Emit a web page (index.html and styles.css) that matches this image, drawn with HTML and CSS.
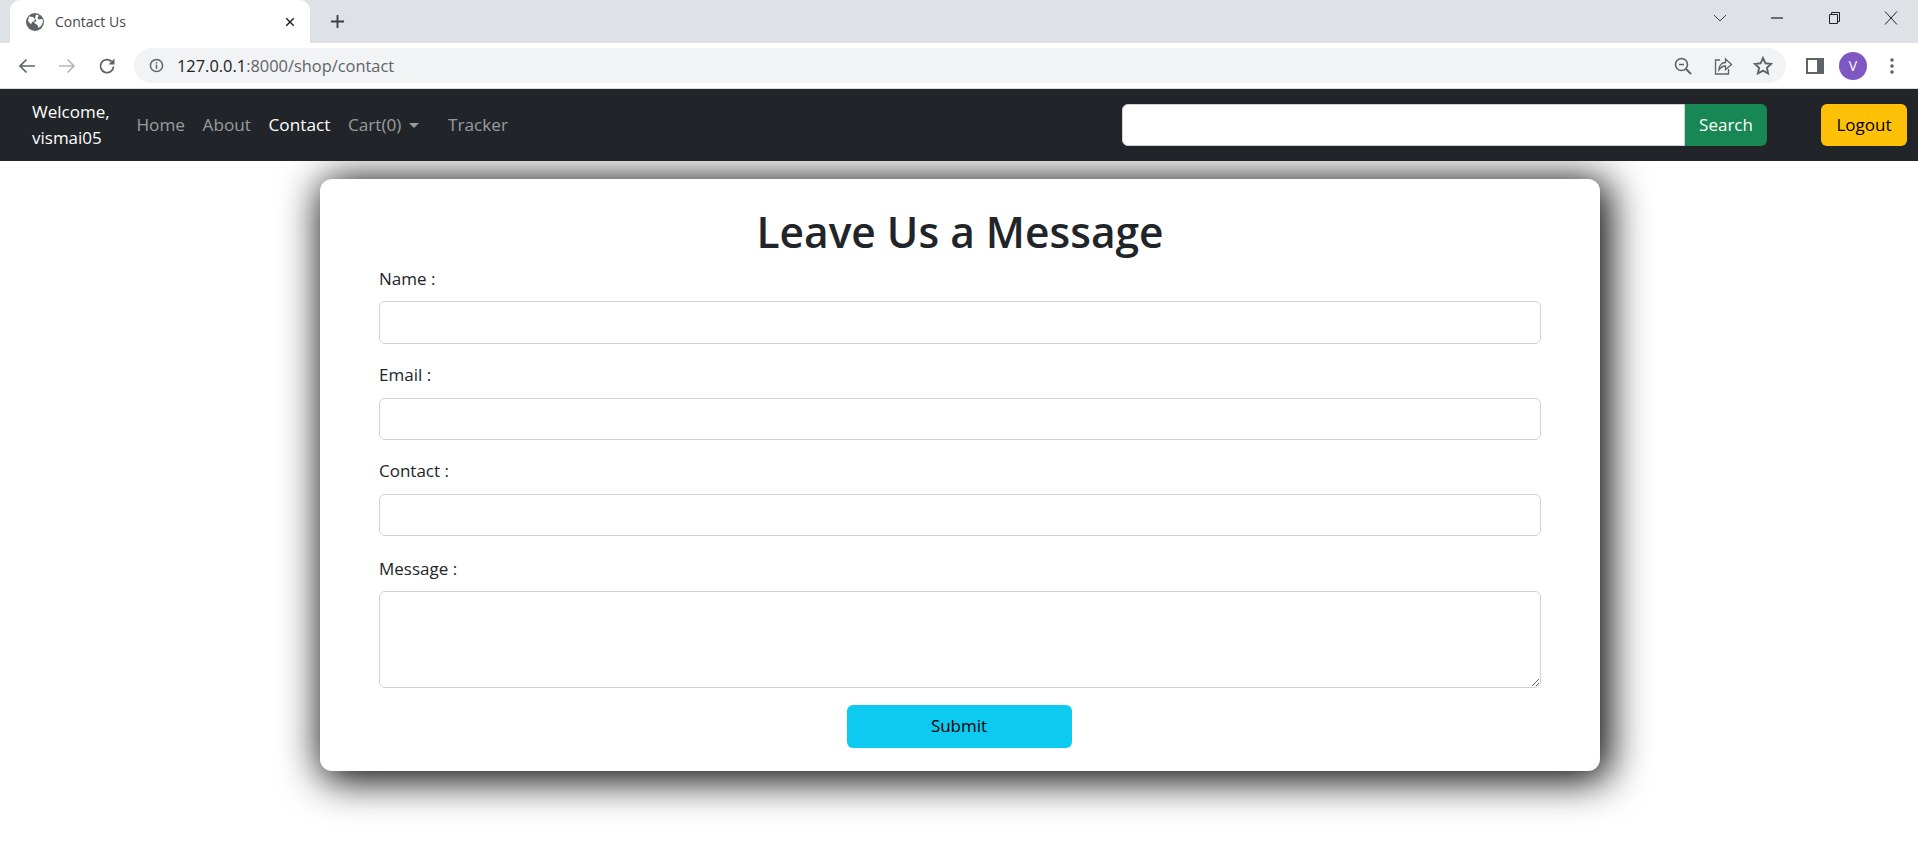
FILE: index.html
```html
<!DOCTYPE html>
<html lang="en">
<head>
    <meta charset="UTF-8">
    <title>Contact Us</title>
    <link rel="stylesheet" href="styles.css">
</head>
<body>
    <!-- Browser tab strip -->
    <div class="tabstrip">
        <div class="tab">
            <svg class="favicon" viewBox="0 0 18 18"><circle cx="9" cy="9" r="9" fill="#5f6368"/><path d="M3 3.5l4 .5 2 2-1 2.5-2 .5-1 2.5L2 8zM10 1.5l3 1-1.500 2.5 1 1.5 4-.5.5 3-2 4-2.500 2-1-3-2.500-1.500L8 9.500l2.500-1.500-1.500-2.500z" fill="#fff"/></svg>
            <span class="tab-title">Contact Us</span>
            <svg class="tab-close" viewBox="0 0 12 12"><path d="M1.500 1.500l9 9M10.500 1.500l-9 9" stroke="#202124" stroke-width="1.700"/></svg>
        </div>
        <svg class="new-tab" viewBox="0 0 16 16"><path d="M8 1v14M1 8h14" stroke="#3c4043" stroke-width="2"/></svg>
        <div class="window-btns">
            <svg viewBox="0 0 14 14"><path d="M1 4l6 6 6-6" fill="none" stroke="#3c4043"/></svg>
            <svg viewBox="0 0 14 14"><path d="M1 7h12" stroke="#202124" stroke-width="1.200"/></svg>
            <svg viewBox="0 0 14 14"><path d="M2.500 3.500h8v9h-8zM4.500 3.500v-2h8v9h-2" fill="none" stroke="#202124"/></svg>
            <svg viewBox="0 0 14 14"><path d="M1 .5l12 13M13 .5l-12 13" stroke="#202124"/></svg>
        </div>
    </div>

    <!-- Browser toolbar -->
    <div class="toolbar">
        <svg class="tool" viewBox="0 0 18 18"><path d="M17 9H2M8.500 2.500L2 9l6.500 6.500" fill="none" stroke="#5f6368" stroke-width="1.700"/></svg>
        <svg class="tool" viewBox="0 0 18 18"><path d="M1 9h15M9.500 2.500L16 9l-6.500 6.500" fill="none" stroke="#b4b6b9" stroke-width="1.700"/></svg>
        <svg class="tool" viewBox="0 0 18 18"><path d="M15.500 9.500a6.500 6.500 0 1 1-1.900-5" fill="none" stroke="#5f6368" stroke-width="1.800"/><path d="M16.500 1.500v6h-6z" fill="#5f6368"/></svg>
        <div class="address">
            <svg class="info" viewBox="0 0 16 16"><circle cx="8" cy="8" r="6.500" fill="none" stroke="#5f6368" stroke-width="1.600"/><path d="M8 7v4.500M8 4.300v1.600" stroke="#5f6368" stroke-width="1.600"/></svg>
            <span class="url"><b>127.0.0.1</b>:8000/shop/contact</span>
            <svg class="addr-icon first" viewBox="0 0 20 20"><circle cx="8.500" cy="8.500" r="6" fill="none" stroke="#5f6368" stroke-width="1.600"/><path d="M13 13l5 5" stroke="#5f6368" stroke-width="2"/><path d="M6 8.500h5" stroke="#5f6368" stroke-width="1.500"/></svg>
            <svg class="addr-icon" viewBox="0 0 20 20"><path d="M7 4H2.500v14h13v-5" fill="none" stroke="#5f6368" stroke-width="1.300"/><path d="M6 14c0-5 3-7.500 6.500-7.500V3L18.500 8.500l-6 5V10C9.500 10 7.500 11.500 6 14z" fill="none" stroke="#5f6368" stroke-width="1.300"/></svg>
            <svg class="addr-icon" viewBox="0 0 20 20"><path d="M10 2l2.400 5.300 5.800.6-4.300 3.900 1.200 5.700-5.100-2.900-5.100 2.900 1.200-5.700L1.800 7.900l5.800-.6z" fill="none" stroke="#5f6368" stroke-width="1.900"/></svg>
        </div>
        <svg class="panel" viewBox="0 0 18 18"><path d="M0 1h18v16H0z" fill="#5f6368"/><path d="M2 3h9v12H2z" fill="#fff"/></svg>
        <div class="avatar">V</div>
        <svg class="dots" viewBox="0 0 4 16"><circle cx="2" cy="2" r="1.800" fill="#5f6368"/><circle cx="2" cy="8" r="1.800" fill="#5f6368"/><circle cx="2" cy="14" r="1.800" fill="#5f6368"/></svg>
    </div>

    <!-- Navbar -->
    <nav class="navbar">
        <div class="brand">Welcome,<br>vismai05</div>
        <a class="nav-link" href="#">Home</a>
        <a class="nav-link" href="#">About</a>
        <a class="nav-link active" href="#">Contact</a>
        <a class="nav-link cart" href="#">Cart(0)<span class="caret"></span></a>
        <a class="nav-link" href="#">Tracker</a>
        <form class="search">
            <input class="search-input" type="text">
            <button class="btn btn-search" type="button">Search</button>
        </form>
        <button class="btn btn-logout" type="button">Logout</button>
    </nav>

    <!-- Contact form -->
    <main class="page">
        <div class="card">
            <h1>Leave Us a Message</h1>
            <div class="field">
                <label for="name">Name :</label>
                <input id="name" type="text">
            </div>
            <div class="field">
                <label for="email">Email :</label>
                <input id="email" type="text">
            </div>
            <div class="field">
                <label for="contact">Contact :</label>
                <input id="contact" type="text">
            </div>
            <div class="field message">
                <label for="message">Message :</label>
                <textarea id="message"></textarea>
            </div>
            <button class="btn btn-submit" type="button">Submit</button>
        </div>
    </main>
</body>
</html>
```

FILE: styles.css
```css
/* General */
body {
    margin: 0;
    height: 852px;
    overflow: hidden;
    background-color: #fff;
    color: #212529;
    font-family: "Open Sans", "Noto Sans", sans-serif;
    font-size: 17px;
}

svg {
    display: block;
    flex: none;
}

/* Tab strip */
.tabstrip {
    height: 43px;
    background-color: #dee1e6;
    display: flex;
    align-items: flex-end;
}

.tab {
    width: 300px;
    height: 43px;
    margin-left: 10px;
    background-color: #fff;
    border-radius: 10px 10px 0 0;
    display: flex;
    align-items: center;
    padding: 0 14px 0 16px;
    box-sizing: border-box;
}

.favicon {
    width: 18px;
    height: 18px;
    margin-top: 1px;
}

.tab-title {
    margin-left: 11px;
    font-size: 14px;
    color: #45494d;
    flex: 1;
}

.tab-close {
    width: 10px;
    height: 10px;
    margin-right: 1px;
    margin-top: 1px;
}

.new-tab {
    width: 15px;
    height: 15px;
    margin: 0 0 14px 20px;
}

.window-btns {
    margin-left: auto;
    align-self: flex-start;
    display: flex;
    gap: 43px;
    padding: 11px 20px 0 0;
}

.window-btns svg {
    width: 14px;
    height: 14px;
}

/* Toolbar */
.toolbar {
    height: 45px;
    border-bottom: 1px solid #dadce0;
    display: flex;
    align-items: center;
    padding-left: 18px;
}

.tool {
    width: 18px;
    height: 18px;
    margin-right: 22px;
}

.address {
    width: 1652px;
    height: 35px;
    margin-left: -4px;
    background-color: #f1f3f4;
    border-radius: 18px;
    display: flex;
    align-items: center;
    padding-left: 15px;
    box-sizing: border-box;
}

.info {
    width: 15px;
    height: 15px;
}

.url {
    margin-left: 13px;
    font-size: 16.4px;
    color: #5f6368;
}

.url b {
    font-weight: 400;
    color: #202124;
}

.addr-icon {
    width: 20px;
    height: 20px;
    margin-right: 20px;
}

.addr-icon:last-child {
    margin-right: 13px;
}

.addr-icon.first {
    margin-left: auto;
}

.panel {
    width: 18px;
    height: 18px;
    margin-left: 20px;
}

.avatar {
    width: 28px;
    height: 28px;
    margin-left: 15px;
    border-radius: 50%;
    background-color: #7e57c2;
    color: #fff;
    font-size: 14px;
    text-align: center;
    line-height: 28px;
}

.dots {
    width: 4px;
    height: 16px;
    margin-left: 23px;
}

/* Navbar */
.navbar {
    position: relative;
    z-index: 1;
    height: 72px;
    background-color: #212529;
    display: flex;
    align-items: center;
    padding-left: 32px;
}

.brand {
    color: #fff;
    line-height: 26.4px;
    margin-right: 18px;
}

.nav-link {
    color: rgba(255, 255, 255, .55);
    text-decoration: none;
    padding: 0 8.8px 2px;
    font-size: 17.2px;
}

.nav-link.active {
    color: #fff;
}

.cart {
    margin-right: 11px;
}

.caret {
    display: inline-block;
    margin-left: 8px;
    vertical-align: 3px;
    border-top: 5px solid;
    border-left: 5px solid transparent;
    border-right: 5px solid transparent;
}

.search {
    display: flex;
    margin-left: auto;
}

.search-input {
    width: 563px;
    height: 42px;
    box-sizing: border-box;
    border: 1px solid #ced4da;
    border-radius: 6px 0 0 6px;
    background-color: #fff;
}

.btn {
    height: 42px;
    border: 0;
    border-radius: 6px;
    font-family: inherit;
    font-size: inherit;
    padding: 0 0 2px;
}

.btn-search {
    width: 82px;
    background-color: #198754;
    color: #fff;
    border-radius: 0 6px 6px 0;
}

.btn-logout {
    width: 86px;
    margin: 0 11px 0 54px;
    background-color: #ffc107;
    color: #000;
}

/* Card */
.page {
    display: flex;
    justify-content: center;
    padding: 18px 0 0 2px;
}

.card {
    width: 1280px;
    height: 592px;
    box-sizing: border-box;
    padding: 26px 59px 0;
    background-color: #fff;
    border-radius: 12px;
    box-shadow: 5px 5px 40px 4px #000;
    display: flex;
    flex-direction: column;
}

h1 {
    margin: 0 0 8px;
    font-size: 42.5px;
    font-weight: 600;
    line-height: 53px;
    text-align: center;
}

.field {
    display: flex;
    flex-direction: column;
    margin-bottom: 18.2px;
}

.field.message {
    margin-top: 1px;
}

.field label {
    line-height: 26.4px;
    margin-bottom: 9px;
}

.field input, .field textarea {
    height: 42.6px;
    box-sizing: border-box;
    border: 1px solid #ced4da;
    border-radius: 6px;
    background-color: #fff;
}

.field textarea {
    height: 97px;
}

.btn-submit {
    align-self: center;
    width: 225px;
    height: 43px;
    margin: -1px 2px 0 0;
    background-color: #0dcaf0;
    color: #000;
}
```
